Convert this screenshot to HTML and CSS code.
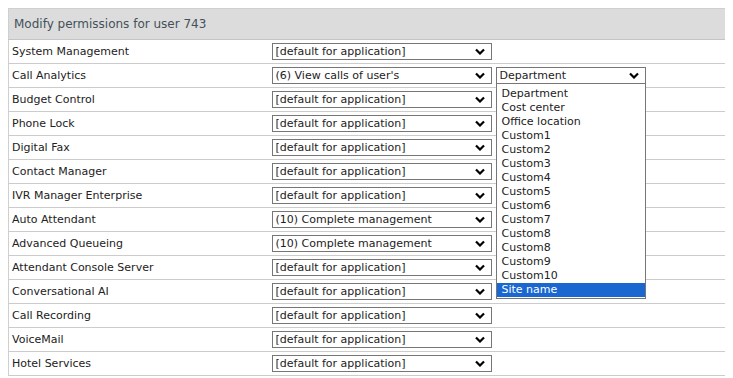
FILE: index.html
```html
<!DOCTYPE html>
<html lang="en">
<head>
	<meta charset="UTF-8">
	<title>Modify permissions</title>
	<link rel="stylesheet" href="styles.css">
</head>
<body>
	<table class="perm-table">
		<tr class="head"><th colspan="3">Modify permissions for user 743</th></tr>
		<tr>
			<td class="app">System Management</td>
			<td class="lvl"><div class="sel"><span>[default for application]</span><svg class="chev" viewBox="0 0 10 6"><path d="M1 1l4 4 4-4"/></svg></div></td>
			<td class="ext"></td>
		</tr>
		<tr>
			<td class="app">Call Analytics</td>
			<td class="lvl"><div class="sel"><span>(6) View calls of user's</span><svg class="chev" viewBox="0 0 10 6"><path d="M1 1l4 4 4-4"/></svg></div></td>
			<td class="ext">
				<div class="combo">
					<div class="sel sel-open"><span>Department</span><svg class="chev" viewBox="0 0 10 6"><path d="M1 1l4 4 4-4"/></svg></div>
					<ul class="dropdown">
						<li>Department</li>
						<li>Cost center</li>
						<li>Office location</li>
						<li>Custom1</li>
						<li>Custom2</li>
						<li>Custom3</li>
						<li>Custom4</li>
						<li>Custom5</li>
						<li>Custom6</li>
						<li>Custom7</li>
						<li>Custom8</li>
						<li>Custom8</li>
						<li>Custom9</li>
						<li>Custom10</li>
						<li class="active">Site name</li>
					</ul>
				</div>
			</td>
		</tr>
		<tr>
			<td class="app">Budget Control</td>
			<td class="lvl"><div class="sel"><span>[default for application]</span><svg class="chev" viewBox="0 0 10 6"><path d="M1 1l4 4 4-4"/></svg></div></td>
			<td class="ext"></td>
		</tr>
		<tr>
			<td class="app">Phone Lock</td>
			<td class="lvl"><div class="sel"><span>[default for application]</span><svg class="chev" viewBox="0 0 10 6"><path d="M1 1l4 4 4-4"/></svg></div></td>
			<td class="ext"></td>
		</tr>
		<tr>
			<td class="app">Digital Fax</td>
			<td class="lvl"><div class="sel"><span>[default for application]</span><svg class="chev" viewBox="0 0 10 6"><path d="M1 1l4 4 4-4"/></svg></div></td>
			<td class="ext"></td>
		</tr>
		<tr>
			<td class="app">Contact Manager</td>
			<td class="lvl"><div class="sel"><span>[default for application]</span><svg class="chev" viewBox="0 0 10 6"><path d="M1 1l4 4 4-4"/></svg></div></td>
			<td class="ext"></td>
		</tr>
		<tr>
			<td class="app">IVR Manager Enterprise</td>
			<td class="lvl"><div class="sel"><span>[default for application]</span><svg class="chev" viewBox="0 0 10 6"><path d="M1 1l4 4 4-4"/></svg></div></td>
			<td class="ext"></td>
		</tr>
		<tr>
			<td class="app">Auto Attendant</td>
			<td class="lvl"><div class="sel"><span>(10) Complete management</span><svg class="chev" viewBox="0 0 10 6"><path d="M1 1l4 4 4-4"/></svg></div></td>
			<td class="ext"></td>
		</tr>
		<tr>
			<td class="app">Advanced Queueing</td>
			<td class="lvl"><div class="sel"><span>(10) Complete management</span><svg class="chev" viewBox="0 0 10 6"><path d="M1 1l4 4 4-4"/></svg></div></td>
			<td class="ext"></td>
		</tr>
		<tr>
			<td class="app">Attendant Console Server</td>
			<td class="lvl"><div class="sel"><span>[default for application]</span><svg class="chev" viewBox="0 0 10 6"><path d="M1 1l4 4 4-4"/></svg></div></td>
			<td class="ext"></td>
		</tr>
		<tr>
			<td class="app">Conversational AI</td>
			<td class="lvl"><div class="sel"><span>[default for application]</span><svg class="chev" viewBox="0 0 10 6"><path d="M1 1l4 4 4-4"/></svg></div></td>
			<td class="ext"></td>
		</tr>
		<tr>
			<td class="app">Call Recording</td>
			<td class="lvl"><div class="sel"><span>[default for application]</span><svg class="chev" viewBox="0 0 10 6"><path d="M1 1l4 4 4-4"/></svg></div></td>
			<td class="ext"></td>
		</tr>
		<tr>
			<td class="app">VoiceMail</td>
			<td class="lvl"><div class="sel"><span>[default for application]</span><svg class="chev" viewBox="0 0 10 6"><path d="M1 1l4 4 4-4"/></svg></div></td>
			<td class="ext"></td>
		</tr>
		<tr>
			<td class="app">Hotel Services</td>
			<td class="lvl"><div class="sel"><span>[default for application]</span><svg class="chev" viewBox="0 0 10 6"><path d="M1 1l4 4 4-4"/></svg></div></td>
			<td class="ext"></td>
		</tr>
	</table>
</body>
</html>
```

FILE: styles.css
```css
*{margin: 0; padding: 0; box-sizing: border-box;}
ul, li{list-style: none;}
body{margin: 8px; background: #fff; font-family: "DejaVu Sans", Verdana, sans-serif; font-size: 11px; color: #222;}

.perm-table{width: 725px; border-collapse: collapse; border: 1px solid #cfcfcf; border-right: 1px solid #d8d8d8;}
.perm-table th{height: 31px; padding: 0 5px; background: #dcdcdc; color: #44505a; font-size: 12px; font-weight: normal; text-align: left; border-bottom: 1px solid #c4c4c4;}
.perm-table td{height: 24px; border-bottom: 1px solid #cccccc; vertical-align: middle;}

.app{width: 259px; padding-left: 3px;}
.lvl{width: 224px; padding-left: 4px;}
.ext{padding-left: 4px;}

.sel{display: flex; align-items: center; justify-content: space-between; width: 220px; height: 17px; padding: 0 6px 0 3px; border: 1px solid #767676; background: #fff; color: #222; white-space: nowrap;}
.chev{width: 10px; height: 7px; fill: none; stroke: #000; stroke-width: 2.2;}

.combo{position: relative; width: 150px;}
.sel-open{width: 150px; height: 18px; border-bottom: 2px solid #767676;}
.dropdown{position: absolute; left: 0; top: 17px; z-index: 2; width: 150px; padding: 3px 0 1px; background: #fff; border: 1px solid #767676; border-top: none;}
.dropdown li{height: 14px; line-height: 14px; padding-left: 5px; color: #222;}
.dropdown li.active{background: #1a67d2; color: #fff;}
```
